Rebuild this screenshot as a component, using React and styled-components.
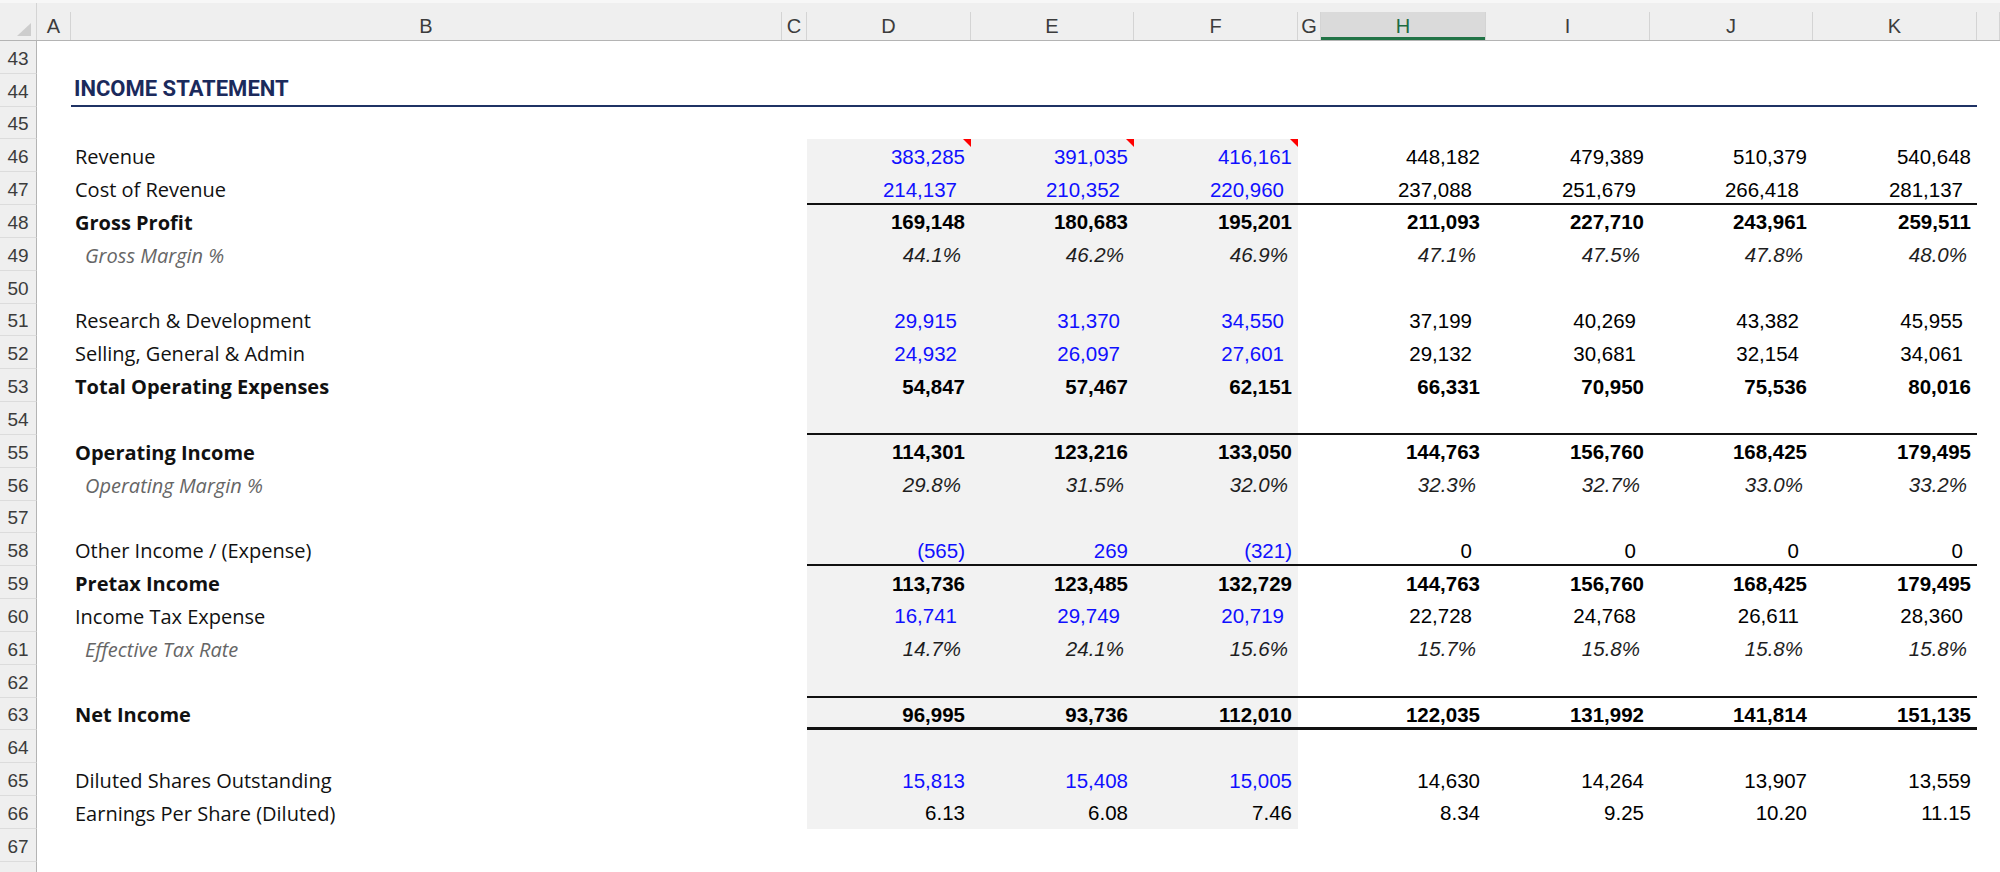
import React from "react";
import styled, { createGlobalStyle } from "styled-components";

const GlobalStyle = createGlobalStyle`
  html, body {
    margin: 0;
    padding: 0;
    background: #fff;
  }
  body {
    width: 2000px;
    height: 872px;
    overflow: hidden;
  }
`;

const ROW_H = 32.84;
const FIG_COLS = [164, 163, 164, 23, 165, 164, 163, 164];

const HEADERS = [
  { label: "A", width: 34 },
  { label: "B", width: 711 },
  { label: "C", width: 25 },
  { label: "D", width: 164 },
  { label: "E", width: 163 },
  { label: "F", width: 164 },
  { label: "G", width: 23 },
  { label: "H", width: 165, selected: true },
  { label: "I", width: 164 },
  { label: "J", width: 163 },
  { label: "K", width: 164 },
  { label: "" },
];

// kind: plain | total | ratio ; input rows show the 3 historic years in blue
const ROWS = [
  { n: 43 },
  { n: 44, title: "INCOME STATEMENT" },
  { n: 45 },
  { n: 46, label: "Revenue", input: true, flag: true, pad: 6,
    figs: ["383,285", "391,035", "416,161", "448,182", "479,389", "510,379", "540,648"] },
  { n: 47, label: "Cost of Revenue", input: true, pad: 14, rule: 2,
    figs: ["214,137", "210,352", "220,960", "237,088", "251,679", "266,418", "281,137"] },
  { n: 48, label: "Gross Profit", kind: "total", pad: 6,
    figs: ["169,148", "180,683", "195,201", "211,093", "227,710", "243,961", "259,511"] },
  { n: 49, label: "Gross Margin %", kind: "ratio", pad: 10,
    figs: ["44.1%", "46.2%", "46.9%", "47.1%", "47.5%", "47.8%", "48.0%"] },
  { n: 50 },
  { n: 51, label: "Research & Development", input: true, pad: 14,
    figs: ["29,915", "31,370", "34,550", "37,199", "40,269", "43,382", "45,955"] },
  { n: 52, label: "Selling, General & Admin", input: true, pad: 14,
    figs: ["24,932", "26,097", "27,601", "29,132", "30,681", "32,154", "34,061"] },
  { n: 53, label: "Total Operating Expenses", kind: "total", pad: 6,
    figs: ["54,847", "57,467", "62,151", "66,331", "70,950", "75,536", "80,016"] },
  { n: 54, rule: 2 },
  { n: 55, label: "Operating Income", kind: "total", pad: 6,
    figs: ["114,301", "123,216", "133,050", "144,763", "156,760", "168,425", "179,495"] },
  { n: 56, label: "Operating Margin %", kind: "ratio", pad: 10,
    figs: ["29.8%", "31.5%", "32.0%", "32.3%", "32.7%", "33.0%", "33.2%"] },
  { n: 57 },
  { n: 58, label: "Other Income / (Expense)", input: true, rule: 2,
    pad: [6, 6, 6, 14, 14, 14, 14],
    figs: ["(565)", "269", "(321)", "0", "0", "0", "0"] },
  { n: 59, label: "Pretax Income", kind: "total", pad: 6,
    figs: ["113,736", "123,485", "132,729", "144,763", "156,760", "168,425", "179,495"] },
  { n: 60, label: "Income Tax Expense", input: true, pad: 14,
    figs: ["16,741", "29,749", "20,719", "22,728", "24,768", "26,611", "28,360"] },
  { n: 61, label: "Effective Tax Rate", kind: "ratio", pad: 10,
    figs: ["14.7%", "24.1%", "15.6%", "15.7%", "15.8%", "15.8%", "15.8%"] },
  { n: 62, rule: 2 },
  { n: 63, label: "Net Income", kind: "total", pad: 6, rule: 3,
    figs: ["96,995", "93,736", "112,010", "122,035", "131,992", "141,814", "151,135"] },
  { n: 64 },
  { n: 65, label: "Diluted Shares Outstanding", input: true, pad: 6,
    figs: ["15,813", "15,408", "15,005", "14,630", "14,264", "13,907", "13,559"] },
  { n: 66, label: "Earnings Per Share (Diluted)", pad: 6,
    figs: ["6.13", "6.08", "7.46", "8.34", "9.25", "10.20", "11.15"] },
  { n: 67 },
  { n: 68, hidden: true },
];

const Sheet = styled.div`
  width: 2000px;
  height: 872px;
  overflow: hidden;
  background: #fff;
  font-family: "Liberation Sans", Arial, sans-serif;
`;

const HeaderBar = styled.div`
  display: flex;
  align-items: flex-end;
  height: 41px;
  box-sizing: border-box;
  background: #efefef;
  border-top: 3px solid #f7f7f7;
  border-bottom: 1px solid #b4b4b4;
`;

const Corner = styled.div`
  flex: 0 0 37px;
  height: 100%;
  box-sizing: border-box;
  border-right: 1px solid #d4d4d4;
  display: flex;
  align-items: flex-end;
  justify-content: flex-end;
  padding: 0 5px 4px 0;
`;

const ColHead = styled.div`
  flex: ${(p) => (p.$width ? `0 0 ${p.$width}px` : "1 1 auto")};
  height: 28px;
  box-sizing: border-box;
  border-right: 1px solid #d4d4d4;
  display: flex;
  align-items: center;
  justify-content: center;
  font-size: 20px;
  line-height: 28px;
  color: ${(p) => (p.$selected ? "#1d6b41" : "#3c3c3c")};
  background: ${(p) => (p.$selected ? "#dadada" : "transparent")};
  box-shadow: ${(p) => (p.$selected ? "inset 0 -3px 0 #217346" : "none")};
`;

const Row = styled.div`
  display: grid;
  grid-template-columns: 37px 34px 711px 25px 1170px 1fr;
  height: ${ROW_H}px;
`;

const RowHead = styled.div`
  grid-column: 1;
  box-sizing: border-box;
  background: #efefef;
  border-right: 1px solid #b4b4b4;
  border-bottom: 1px solid #dcdcdc;
  display: flex;
  align-items: flex-end;
  justify-content: center;
  padding-bottom: 5px;
  font-size: 19px;
  line-height: 1;
  color: #3c3c3c;
`;

const Label = styled.div`
  grid-column: 3;
  display: flex;
  align-items: flex-end;
  padding: 0 0 5px ${(p) => (p.$kind === "ratio" ? 14 : 4)}px;
  font-family: "Open Sans", "Noto Sans", sans-serif;
  font-size: 20px;
  line-height: 1;
  white-space: nowrap;
  font-weight: ${(p) => (p.$kind === "total" ? 700 : 400)};
  font-style: ${(p) => (p.$kind === "ratio" ? "italic" : "normal")};
  color: ${(p) => (p.$kind === "ratio" ? "#666" : "#111")};
`;

const Title = styled.div`
  grid-column: 3 / 6;
  box-sizing: border-box;
  display: flex;
  align-items: flex-end;
  padding: 0 0 5px 3px;
  border-bottom: 2px solid #1f3264;
  font-family: Roboto, "Noto Sans", sans-serif;
  font-size: 22px;
  line-height: 1;
  font-weight: 700;
  color: #1b2a5c;
`;

const Band = styled.div`
  grid-column: 5;
  display: grid;
  grid-template-columns: ${FIG_COLS.map((w) => `${w}px`).join(" ")};
`;

const Fig = styled.div`
  position: relative;
  box-sizing: border-box;
  display: flex;
  align-items: flex-end;
  justify-content: flex-end;
  padding: 0 ${(p) => p.$pad}px 5px 0;
  font-size: 20.5px;
  line-height: 1;
  white-space: nowrap;
  background: ${(p) => (p.$shade ? "#f2f2f2" : "transparent")};
  box-shadow: ${(p) => (p.$rule ? `inset 0 -${p.$rule}px 0 #111` : "none")};
  color: ${(p) => (p.$input ? "#1010ff" : p.$kind === "ratio" ? "#1e1e1e" : "#000")};
  font-weight: ${(p) => (p.$kind === "total" ? 700 : 400)};
  font-style: ${(p) => (p.$kind === "ratio" ? "italic" : "normal")};
`;

const Flag = styled.span`
  position: absolute;
  top: 0;
  right: 0;
  width: 0;
  height: 0;
  border-left: 8px solid transparent;
  border-top: 8px solid #ff0000;
`;

const SelectAll = () => (
  <svg width="14" height="13" viewBox="0 0 14 13">
    <polygon points="14,0 14,13 0,13" fill="#cdcdcd" />
  </svg>
);

const Figures = ({ row }) => {
  const shaded = row.n >= 46 && row.n <= 66;
  const figs = row.figs || [];
  // D, E, F are the historic years; G is the spacer before the forecast
  const cells = [figs[0], figs[1], figs[2], null, figs[3], figs[4], figs[5], figs[6]];
  return (
    <Band>
      {cells.map((value, i) => {
        const idx = i < 3 ? i : i - 1;
        const pad = Array.isArray(row.pad) ? row.pad[idx] : row.pad || 6;
        const historic = i < 3;
        return (
          <Fig
            key={i}
            $pad={pad}
            $shade={shaded && historic}
            $rule={row.rule}
            $input={row.input && historic}
            $kind={row.kind}
          >
            {value}
            {row.flag && historic && <Flag />}
          </Fig>
        );
      })}
    </Band>
  );
};

const App = () => {
  return (
    <Sheet>
      <GlobalStyle />
      <HeaderBar>
        <Corner>
          <SelectAll />
        </Corner>
        {HEADERS.map((h, i) => (
          <ColHead key={i} $width={h.width} $selected={h.selected}>
            {h.label}
          </ColHead>
        ))}
      </HeaderBar>
      {ROWS.map((row) => (
        <Row key={row.n}>
          <RowHead>{row.hidden ? "" : row.n}</RowHead>
          {row.title && <Title>{row.title}</Title>}
          {row.label && <Label $kind={row.kind}>{row.label}</Label>}
          {!row.title && <Figures row={row} />}
        </Row>
      ))}
    </Sheet>
  );
};

export default App;
